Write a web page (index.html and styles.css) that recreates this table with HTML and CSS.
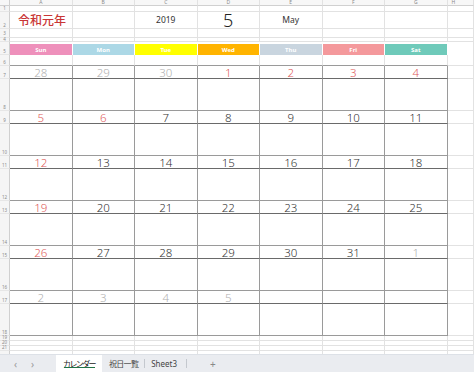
FILE: index.html
```html
<!DOCTYPE html>
<html lang="ja">
<head>
<meta charset="utf-8">
<title>カレンダー</title>
<link rel="stylesheet" href="styles.css">
</head>
<body>
<div class="sheet">
  <div class="row colhead">
    <div class="corner"></div><div>A</div><div>B</div><div>C</div><div>D</div><div>E</div><div>F</div><div>G</div><div class="hcol">H</div>
  </div>
  <div class="row h6"><div class="rh">1</div><div></div><div></div><div></div><div></div><div></div><div></div><div></div><div></div></div>
  <div class="row h17">
    <div class="rh">2</div>
    <div class="title"><span>令和元年</span></div><div></div>
    <div class="year">2019</div>
    <div class="month">5</div>
    <div class="year">May</div>
    <div></div><div></div><div></div>
  </div>
  <div class="row h9"><div class="rh">3</div><div></div><div></div><div></div><div></div><div></div><div></div><div></div><div></div></div>
  <div class="row h4"><div class="rh">4</div><div></div><div></div><div></div><div></div><div></div><div></div><div></div><div></div></div>
  <div class="row h13 bars">
    <div class="rh">5</div>
    <div><span class="bar sun">Sun</span></div>
    <div><span class="bar mon">Mon</span></div>
    <div><span class="bar tue">Tue</span></div>
    <div><span class="bar wed">Wed</span></div>
    <div><span class="bar thu">Thu</span></div>
    <div><span class="bar fri">Fri</span></div>
    <div><span class="bar sat">Sat</span></div>
    <div></div>
  </div>
  <div class="row h11 caltop"><div class="rh">6</div><div></div><div></div><div></div><div></div><div></div><div></div><div></div><div></div></div>

  <div class="row date"><div class="rh">7</div><div class="g">28</div><div class="g">29</div><div class="g">30</div><div class="r">1</div><div class="r">2</div><div class="r">3</div><div class="r">4</div><div></div></div>
  <div class="row blank"><div class="rh">8</div><div></div><div></div><div></div><div></div><div></div><div></div><div></div><div></div></div>

  <div class="row date"><div class="rh">9</div><div class="r">5</div><div class="r">6</div><div>7</div><div>8</div><div>9</div><div>10</div><div>11</div><div></div></div>
  <div class="row blank"><div class="rh">10</div><div></div><div></div><div></div><div></div><div></div><div></div><div></div><div></div></div>

  <div class="row date"><div class="rh">11</div><div class="r">12</div><div>13</div><div>14</div><div>15</div><div>16</div><div>17</div><div>18</div><div></div></div>
  <div class="row blank"><div class="rh">12</div><div></div><div></div><div></div><div></div><div></div><div></div><div></div><div></div></div>

  <div class="row date"><div class="rh">13</div><div class="r">19</div><div>20</div><div>21</div><div>22</div><div>23</div><div>24</div><div>25</div><div></div></div>
  <div class="row blank"><div class="rh">14</div><div></div><div></div><div></div><div></div><div></div><div></div><div></div><div></div></div>

  <div class="row date"><div class="rh">15</div><div class="r">26</div><div>27</div><div>28</div><div>29</div><div>30</div><div>31</div><div class="g">1</div><div></div></div>
  <div class="row blank"><div class="rh">16</div><div></div><div></div><div></div><div></div><div></div><div></div><div></div><div></div></div>

  <div class="row date"><div class="rh">17</div><div class="g">2</div><div class="g">3</div><div class="g">4</div><div class="g">5</div><div></div><div></div><div></div><div></div></div>
  <div class="row blank"><div class="rh">18</div><div></div><div></div><div></div><div></div><div></div><div></div><div></div><div></div></div>

  <div class="row h5 after"><div class="rh">19</div><div></div><div></div><div></div><div></div><div></div><div></div><div></div><div></div></div>
  <div class="row h5 after"><div class="rh">20</div><div></div><div></div><div></div><div></div><div></div><div></div><div></div><div></div></div>
  <div class="row h5 after"><div class="rh">21</div><div></div><div></div><div></div><div></div><div></div><div></div><div></div><div></div></div>
  <div class="row h5 after"><div class="rh"></div><div></div><div></div><div></div><div></div><div></div><div></div><div></div><div></div></div>
</div>
<div class="tabs">
  <span class="nav">&lsaquo;</span>
  <span class="nav">&rsaquo;</span>
  <div class="tab active"><span class="kana">カレンダー</span></div>
  <div class="tab"><span class="kanji">祝日一覧</span></div>
  <span class="sep"></span>
  <div class="tab sheet3">Sheet3</div>
  <span class="sep"></span>
  <span class="plus">+</span>
</div>
</body>
</html>
```

FILE: styles.css
```css
* {
  box-sizing: border-box;
  margin: 0;
  padding: 0;
}

html, body {
  width: 474px;
  height: 372px;
  overflow: hidden;
  background: #ffffff;
}

body {
  font-family: "Noto Sans", "Noto Sans CJK JP", sans-serif;
  color: #333333;
}

.sheet {
  height: 354px;
  overflow: hidden;
}

.row {
  display: grid;
  grid-template-columns: 10px repeat(7, 62.5px) 1fr;
  grid-template-rows: 100%;
  overflow: visible;
}

.row > div {
  border-right: 1px solid #e2e2e2;
  border-bottom: 1px solid #e2e2e2;
  display: flex;
  align-items: center;
  justify-content: center;
  white-space: nowrap;
  min-height: 0;
  line-height: 1;
}

.row > .rh {
  background: #f5f5f5;
  border-right: 1px solid #d0d0d0;
  border-bottom: 1px solid #e6e6e6;
  font-size: 4.5px;
  line-height: 4px;
  color: #8a8a8a;
  align-items: flex-end;
  padding-bottom: 1px;
  overflow: visible;
}

.h9 > .rh {
  padding-bottom: 2px;
}

.h4 > .rh {
  padding-bottom: 0;
}

.colhead {
  height: 6px;
}

.colhead > div {
  background: #f7f7f7;
  border-bottom: 1px solid #d0d0d0;
  border-right: 1px solid #e2e2e2;
  font-size: 5px;
  line-height: 5px;
  color: #8a8a8a;
}

.colhead > .corner {
  border-right: 1px solid #d0d0d0;
}

.colhead > .hcol {
  justify-content: flex-start;
  padding-left: 4px;
}

.h4 { height: 4px; }
.h5 { height: 5px; }
.h6 { height: 6px; }
.h9 { height: 9px; }
.h11 { height: 11px; }
.h13 { height: 13px; }
.h17 { height: 17px; }

.row > .title {
  justify-content: flex-start;
  padding-left: 8px;
  font-family: "Noto Sans CJK JP", sans-serif;
  font-size: 12px;
  font-weight: 500;
  color: #c93636;
  overflow: visible;
}

.row > .year {
  font-size: 8.5px;
  color: #333333;
}

.row > .month {
  font-size: 18px;
  font-weight: 300;
  color: #222222;
}

.bars > div {
  border-bottom: none;
  border-right: 1px solid #ffffff;
  align-items: flex-end;
}

.bars > div:last-child {
  border-right: 1px solid #e2e2e2;
}

.bar {
  display: flex;
  align-items: center;
  justify-content: center;
  width: 100%;
  height: 11px;
  font-size: 6px;
  font-weight: 700;
  color: #ffffff;
}

.sun { background: #ee90bb; }
.mon { background: #acd8e6; }
.tue { background: #ffff00; }
.wed { background: #ffb400; }
.thu { background: #c9d5df; }
.fri { background: #f4999c; }
.sat { background: #6fcaba; }

.caltop > div:nth-child(n+2):nth-child(-n+8) {
  border-bottom: 1px solid #9a9a9a;
}

.date { height: 13px; }
.blank { height: 32px; }

.date > div:nth-child(n+2):nth-child(-n+8),
.blank > div:nth-child(n+2):nth-child(-n+8) {
  border-right: 1px solid #9a9a9a;
}

.date > div:nth-child(n+2):nth-child(-n+8) {
  border-bottom: 1px solid #6a6a6a;
  font-size: 11.5px;
  line-height: 11px;
  font-weight: 300;
  color: #333333;
  padding-top: 1px;
}

.blank > div:nth-child(n+2):nth-child(-n+8) {
  border-bottom: 1px solid #9a9a9a;
}

.date > div.r:nth-child(n+2):nth-child(-n+8) {
  color: #e05a5a;
}

.date > div.g:nth-child(n+2):nth-child(-n+8) {
  color: #b0b0b0;
}

.tabs {
  height: 18px;
  background: #eaecf0;
  display: flex;
  align-items: center;
  font-size: 8px;
  color: #444444;
  border-top: 1px solid #dde1e7;
}

.nav {
  width: 17px;
  text-align: center;
  font-size: 10px;
  color: #9a9a9a;
  line-height: 1;
}

.nav:first-child {
  margin-left: 7px;
}

.tab {
  height: 100%;
  display: flex;
  align-items: center;
  padding: 0 6px;
  white-space: nowrap;
}

.tab.active {
  margin-left: 15px;
  width: 46px;
  justify-content: center;
  background: #ffffff;
  position: relative;
  color: #222222;
}

.tab.active::after {
  content: "";
  position: absolute;
  left: 8px;
  right: 7px;
  bottom: 4px;
  height: 1.5px;
  background: #217346;
}

.kana {
  font-family: "Noto Sans CJK JP", sans-serif;
  letter-spacing: -1.6px;
}

.kanji {
  font-family: "Noto Sans CJK JP", sans-serif;
  letter-spacing: -0.7px;
}

.tab:nth-of-type(2) {
  padding-left: 7px;
}

.tab.sheet3 {
  padding: 0 9px 0 6px;
}

.sep {
  width: 1px;
  height: 9px;
  background: #c4c8ce;
}

.plus {
  margin-left: 23px;
  font-size: 10px;
  color: #888888;
}
```
